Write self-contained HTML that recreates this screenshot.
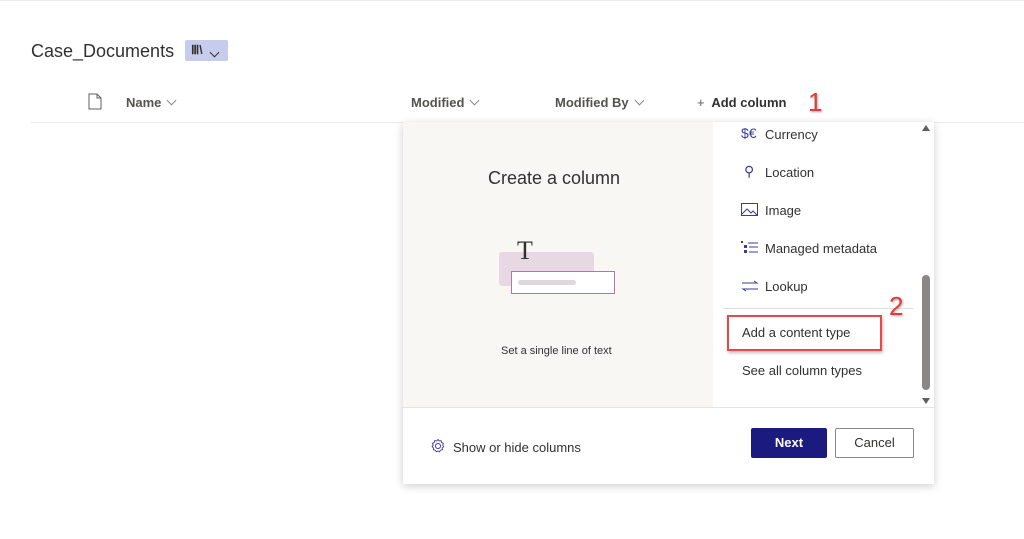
<!DOCTYPE html>
<html><head><style>
body{margin:0;width:1024px;height:539px;background:#fff;font-family:"Liberation Sans",sans-serif;position:relative;overflow:hidden;color:#323130}
.a{position:absolute;white-space:nowrap}
.hdr{font-size:13px;font-weight:bold;color:#555350}
.chev{display:inline-block;width:6px;height:6px;border-right:1px solid #8a8886;border-bottom:1px solid #8a8886;transform:rotate(45deg);margin-left:7px;position:relative;top:-3px}
.item{font-size:13px;color:#323130}
.ic{position:absolute;color:#3b3a9a;font-size:14px}
</style></head><body>
<div class="a" style="left:0;top:0;width:1024px;height:1px;background:#edebe9"></div>
<div class="a" style="left:31px;top:41px;font-size:18px;color:#323130">Case_Documents</div>
<div class="a" style="left:185px;top:40px;width:43px;height:21px;background:#c7cbec;border-radius:2px"></div>
<div class="a" style="left:191px;top:43px;font-size:12px;color:#323130;font-weight:bold">Ⅲ\</div>
<div class="a" style="left:208px;top:46px"><span class="chev" style="border-color:#323130;margin-left:3px"></span></div>
<svg class="a" style="left:88px;top:93px" width="14" height="17"><path d="M1 1h8l4 4v11H1z M9 1v4h4" fill="none" stroke="#605e5c"/></svg>
<div class="a hdr" style="left:126px;top:95px">Name<span class="chev"></span></div>
<div class="a hdr" style="left:411px;top:95px">Modified<span class="chev"></span></div>
<div class="a hdr" style="left:555px;top:95px">Modified By<span class="chev"></span></div>
<div class="a hdr" style="left:697px;top:95px;color:#323130"><span style="font-weight:normal;color:#605e5c">+</span>&nbsp; Add column</div>
<div class="a" style="left:808px;top:87px;font-size:26px;color:#e23b3b;text-shadow:1px 1px 2px #aaa">1</div>
<div class="a" style="left:31px;top:122px;width:993px;height:1px;background:#edebe9"></div>

<div class="a" style="left:403px;top:122px;width:531px;height:362px;background:#fff;box-shadow:0 2px 8px rgba(0,0,0,.2)"></div>
<div class="a" style="left:403px;top:122px;width:310px;height:286px;background:#f8f7f4"></div>
<div class="a" style="left:403px;top:407px;width:531px;height:1px;background:#e6e4e2"></div>
<div class="a" style="left:488px;top:168px;font-size:18px;color:#323130">Create a column</div>
<div class="a" style="left:499px;top:252px;width:95px;height:34px;background:#e8d8e3;border-radius:3px"></div>
<div class="a" style="left:511px;top:271px;width:104px;height:23px;background:#fff;border:1.5px solid #a97aa6;box-sizing:border-box"></div>
<div class="a" style="left:518px;top:280px;width:58px;height:5px;background:#dcd8dc;border-radius:3px"></div>
<div class="a" style="left:517px;top:236px;font-size:26px;font-family:'Liberation Serif',serif;color:#323130">T</div>
<div class="a" style="left:501px;top:345px;font-size:11px;color:#323130">Set a single line of text</div>

<div class="ic" style="left:741px;top:125px">$€</div><div class="a item" style="left:765px;top:127px">Currency</div>
<div class="ic" style="left:744px;top:163px">⚲</div><div class="a item" style="left:765px;top:165px">Location</div>
<svg class="a" style="left:741px;top:203px" width="17" height="13"><rect x="0.5" y="0.5" width="16" height="12" fill="none" stroke="#3b3a9a"/><path d="M1 11l5-5 4 4 2-2 4 4" fill="none" stroke="#3b3a9a"/></svg>
<div class="a item" style="left:765px;top:203px">Image</div>
<svg class="a" style="left:741px;top:241px" width="17" height="13"><rect x="0" y="0" width="2" height="2" fill="#3b3a9a"/><rect x="3" y="4" width="3" height="3" fill="#3b3a9a"/><rect x="3" y="9" width="3" height="3" fill="#3b3a9a"/><path d="M7 2h10M8 6h9M8 11h9" stroke="#3b3a9a"/></svg>
<div class="a item" style="left:765px;top:241px">Managed metadata</div>
<svg class="a" style="left:741px;top:280px" width="18" height="12"><path d="M1 3h15l-3-2M17 9H2l3 2" fill="none" stroke="#3b3a9a"/></svg>
<div class="a item" style="left:765px;top:279px">Lookup</div>
<div class="a" style="left:723px;top:308px;width:190px;height:1px;background:#e1dfdd"></div>
<div class="a" style="left:727px;top:315px;width:155px;height:36px;border:2px solid #e8474b;box-sizing:border-box;box-shadow:1px 2px 3px rgba(0,0,0,.25)"></div>
<div class="a item" style="left:742px;top:325px">Add a content type</div>
<div class="a" style="left:889px;top:291px;font-size:26px;color:#e23b3b;text-shadow:1px 1px 2px #aaa">2</div>
<div class="a item" style="left:742px;top:363px">See all column types</div>
<div class="a" style="left:922px;top:125px;width:0;height:0;border:4px solid transparent;border-bottom:6px solid #605e5c;border-top:0"></div>
<div class="a" style="left:922px;top:398px;width:0;height:0;border:4px solid transparent;border-top:6px solid #605e5c;border-bottom:0"></div>
<div class="a" style="left:922px;top:275px;width:8px;height:115px;background:#8a8886;border-radius:4px"></div>

<svg class="a" style="left:430px;top:438px" width="16" height="16" viewBox="0 0 16 16"><circle cx="8" cy="8" r="2.5" fill="none" stroke="#3b3a9a"/><path d="M8 1.5l1.2 1.5 1.9-.4.4 1.9 1.8.8-.6 1.8 1 1.6-1.5 1.2.2 1.9-1.9.3-.9 1.7-1.7-.8-1.7.8-.9-1.7-1.9-.3.2-1.9-1.5-1.200 1-1.6-.6-1.8 1.8-.8.4-1.9 1.9.4z" fill="none" stroke="#3b3a9a" stroke-width="0.9"/></svg>
<div class="a" style="left:453px;top:440px;font-size:13px;color:#323130">Show or hide columns</div>
<div class="a" style="left:751px;top:428px;width:76px;height:30px;background:#1b1a7e;border-radius:2px;color:#fff;font-size:13px;font-weight:bold;text-align:center;line-height:30px">Next</div>
<div class="a" style="left:835px;top:428px;width:79px;height:30px;border:1px solid #8a8886;box-sizing:border-box;border-radius:2px;font-size:13px;text-align:center;line-height:28px">Cancel</div>
</body></html>
